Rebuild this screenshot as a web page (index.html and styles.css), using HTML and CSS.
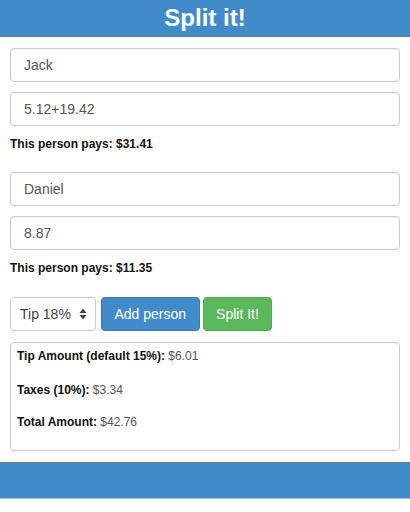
FILE: index.html
```html
<!DOCTYPE html>
<html>
<head>
<meta charset="utf-8">
<link rel="stylesheet" href="styles.css">
</head>
<body>
<header class="topbar"><h1 class="title">Split it!</h1></header>
<main class="content">
  <section class="person">
    <input class="field" type="text" value="Jack">
    <input class="field" type="text" value="5.12+19.42">
    <p class="pays">This person pays: $31.41</p>
  </section>
  <section class="person">
    <input class="field" type="text" value="Daniel">
    <input class="field" type="text" value="8.87">
    <p class="pays">This person pays: $11.35</p>
  </section>
  <div class="controls">
    <div class="select-wrap">
      <select class="tip-select"><option>Tip 18%</option></select>
      <svg class="select-arrows" width="8" height="12" viewBox="0 0 8 12"><path d="M4 0.5 L7.5 5 H0.5 Z" fill="#444"/><path d="M4 11.5 L7.5 7 H0.5 Z" fill="#444"/></svg>
    </div>
    <button class="btn btn-blue">Add person</button>
    <button class="btn btn-green">Split It!</button>
  </div>
  <div class="results">
    <p class="row r1"><b>Tip Amount (default 15%):</b> <span class="val">$6.01</span></p>
    <p class="row r2"><b>Taxes (10%):</b> <span class="val">$3.34</span></p>
    <p class="row r3"><b>Total Amount:</b> <span class="val">$42.76</span></p>
  </div>
</main>
<footer class="bottombar"></footer>
</body>
</html>
```

FILE: styles.css
```css
* { box-sizing: border-box; }
html, body { margin: 0; padding: 0; background: #fff; }
body { font-family: "Liberation Sans", Arial, sans-serif; color: #222; }

.topbar {
  height: 37px;
  background: #428bca;
  border-bottom: 1px solid #6e7b86;
  display: flex;
  align-items: center;
  justify-content: center;
}
.title {
  margin: 0;
  color: #fff;
  font-size: 24px;
  font-weight: bold;
  line-height: 36px;
}

.content {
  padding: 11px 10px 0;
}
.person {
  display: flex;
  flex-direction: column;
}
.field {
  display: block;
  width: 100%;
  height: 34px;
  margin: 0 0 10px;
  padding: 6px 13px;
  font-family: "Liberation Sans", Arial, sans-serif;
  font-size: 14px;
  color: #555;
  background: #fff;
  border: 1px solid #ccc;
  border-radius: 4px;
  box-shadow: inset 0 1px 1px rgba(0,0,0,0.06);
  outline: none;
}
.pays {
  margin: 0 0 19px;
  font-size: 12px;
  font-weight: bold;
  line-height: 17px;
  color: #111;
}
.person + .person .pays { margin-bottom: 20px; }

.controls {
  display: flex;
  align-items: center;
  height: 34px;
}
.select-wrap {
  position: relative;
  width: 86px;
  height: 34px;
  margin-right: 5px;
}
.tip-select {
  -webkit-appearance: none;
  appearance: none;
  width: 100%;
  height: 34px;
  padding: 0 0 0 9px;
  font-family: "Liberation Sans", Arial, sans-serif;
  font-size: 14px;
  color: #444;
  background: #fff;
  border: 1px solid #ccc;
  border-radius: 4px;
  outline: none;
}
.select-arrows {
  position: absolute;
  right: 9px;
  top: 11px;
}
.btn {
  height: 34px;
  padding: 0 12.5px;
  font-family: "Liberation Sans", Arial, sans-serif;
  font-size: 14px;
  color: #fff;
  border-radius: 4px;
  border: 1px solid transparent;
}
.btn-blue {
  background: #428bca;
  border-color: #357ebd;
  margin-right: 3px;
}
.btn-green {
  background: #5cb85c;
  border-color: #4cae4c;
}

.results {
  margin-top: 11px;
  height: 109px;
  border: 1px solid #ccc;
  border-radius: 4px;
  padding: 5px 6px 0;
}
.row {
  margin: 0;
  font-size: 12px;
  line-height: 17px;
  color: #111;
}
.row b { font-weight: bold; }
.val { color: #555; }
.r2 { margin-top: 17px; }
.r3 { margin-top: 15px; }

.bottombar {
  margin-top: 11px;
  height: 37px;
  background: #428bca;
  border-top: 1px solid #6e7b86;
  border-bottom: 1px solid #9cc2e3;
}
```
